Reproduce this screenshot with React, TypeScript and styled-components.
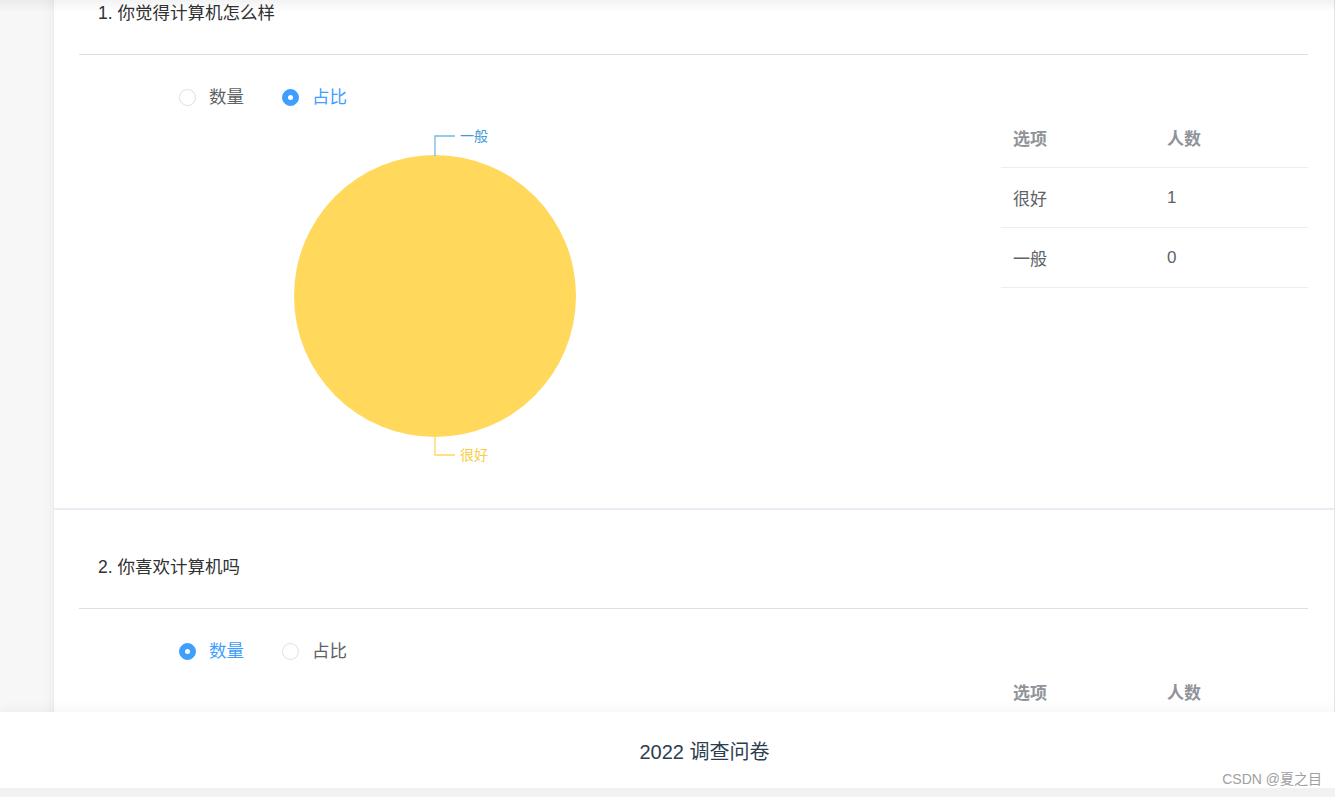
import React, { useLayoutEffect, useRef } from 'react'
import styled, { createGlobalStyle } from 'styled-components'

const GlobalStyle = createGlobalStyle`
  html, body { margin: 0; padding: 0; }
  body {
    font-family: "Liberation Sans", "Noto Sans CJK SC", sans-serif;
    background: #f2f2f2;
  }
`

type Row = { label: string; count: number }

type Question = {
  title: string
  mode: 'count' | 'ratio'
  rows: Row[]
}

const questions: Question[] = [
  {
    title: '1. 你觉得计算机怎么样',
    mode: 'ratio',
    rows: [
      { label: '很好', count: 1 },
      { label: '一般', count: 0 },
    ],
  },
  {
    title: '2. 你喜欢计算机吗',
    mode: 'count',
    rows: [
      { label: '很好', count: 1 },
      { label: '一般', count: 0 },
    ],
  },
]

const PieChart = () => (
  <svg width="520" height="365" viewBox="0 0 520 365">
    <circle cx="256" cy="188" r="141" fill="#ffd85c" />
    {/* 一般 label (zero slice) */}
    <polyline points="256,48 256,28 276,28" fill="none" stroke="#73b8e6" strokeWidth="1.3" />
    <text x="281" y="33" fontSize="14" fill="#3f9ad6" fontFamily="Liberation Sans, Noto Sans CJK SC, sans-serif">
      一般
    </text>
    {/* 很好 label */}
    <polyline points="256,329 256,347 276,347" fill="none" stroke="#ffd85c" strokeWidth="1.3" />
    <text x="281" y="352" fontSize="14" fill="#f8cd4a" fontFamily="Liberation Sans, Noto Sans CJK SC, sans-serif">
      很好
    </text>
  </svg>
)

const App = () => {
  const scrollRef = useRef<HTMLDivElement>(null)

  useLayoutEffect(() => {
    if (scrollRef.current) scrollRef.current.scrollTop = 44
  }, [])

  return (
    <Page>
      <GlobalStyle />
      <Viewport>
        <ScrollArea ref={scrollRef}>
          <Main>
            {questions.map((q, i) => (
              <Card key={i}>
                <CardHead>
                  <Title>{q.title}</Title>
                </CardHead>
                <CardBody>
                  <ChartSide>
                    <RadioGroup>
                      <RadioItem $checked={q.mode === 'count'}>
                        <RadioDot $checked={q.mode === 'count'} />
                        数量
                      </RadioItem>
                      <RadioItem $checked={q.mode === 'ratio'}>
                        <RadioDot $checked={q.mode === 'ratio'} />
                        占比
                      </RadioItem>
                    </RadioGroup>
                    {q.mode === 'ratio' ? <PieChart /> : <ChartBlank />}
                  </ChartSide>
                  <Table>
                    <colgroup>
                      <col style={{ width: 154 }} />
                      <col />
                    </colgroup>
                    <thead>
                      <tr>
                        <Th>选项</Th>
                        <Th>人数</Th>
                      </tr>
                    </thead>
                    <tbody>
                      {q.rows.map((r) => (
                        <tr key={r.label}>
                          <Td>{r.label}</Td>
                          <Td>{r.count}</Td>
                        </tr>
                      ))}
                    </tbody>
                  </Table>
                </CardBody>
              </Card>
            ))}
          </Main>
        </ScrollArea>
        <TopShade />
      </Viewport>
      <Footer>
        2022 调查问卷
        <Watermark>CSDN @夏之目</Watermark>
      </Footer>
    </Page>
  )
}

export default App

const Page = styled.div`
  height: 797px;
  display: flex;
  flex-direction: column;
  background: #f2f2f2;
  overflow: hidden;
`

const Viewport = styled.div`
  position: relative;
  height: 712px;
  flex-shrink: 0;
`

const ScrollArea = styled.div`
  height: 100%;
  overflow: hidden;
  background: #f7f7f7;
`

const TopShade = styled.div`
  position: absolute;
  left: 0;
  right: 0;
  top: 0;
  height: 12px;
  background: linear-gradient(to bottom, rgba(0, 0, 0, 0.05), rgba(0, 0, 0, 0));
  pointer-events: none;
`

const Main = styled.div`
  margin-left: 53px;
  width: 1280px;
  display: flex;
  flex-direction: column;
  gap: 2px;
  background: #e9edf3;
  border-left: 1px solid #ececec;
  border-right: 1px solid #e4e4e4;
  box-shadow: -4px 0 8px rgba(0, 0, 0, 0.03);
`

const Card = styled.div`
  background: #fff;
  padding: 0 26px 35px 25px;
`

const CardHead = styled.div`
  padding: 45px 0 29px 19px;
  border-bottom: 1px solid #dcdfe6;
`

const Title = styled.div`
  font-size: 17.5px;
  line-height: 24px;
  color: #303133;
`

const CardBody = styled.div`
  display: flex;
  justify-content: space-between;
  align-items: flex-start;
`

const ChartSide = styled.div`
  padding: 32px 0 0 100px;
  display: flex;
  flex-direction: column;
`

const ChartBlank = styled.div`
  width: 520px;
  height: 365px;
`

const RadioGroup = styled.div`
  display: flex;
  align-items: center;
  gap: 38px;
  height: 20px;
  margin-bottom: 1px;
`

const RadioItem = styled.label<{ $checked: boolean }>`
  display: flex;
  align-items: center;
  gap: 13px;
  font-size: 17.5px;
  line-height: 20px;
  color: ${(p) => (p.$checked ? '#409eff' : '#606266')};
`

const RadioDot = styled.span<{ $checked: boolean }>`
  width: 17px;
  height: 17px;
  box-sizing: border-box;
  border-radius: 50%;
  border: 1px solid ${(p) => (p.$checked ? '#409eff' : '#dcdfe6')};
  background: ${(p) => (p.$checked ? '#409eff' : '#fff')};
  display: flex;
  align-items: center;
  justify-content: center;

  &::after {
    content: '';
    width: 5px;
    height: 5px;
    border-radius: 50%;
    background: #fff;
  }
`

const Table = styled.table`
  width: 307px;
  margin-top: 53px;
  border-collapse: collapse;
  table-layout: fixed;
  font-size: 17px;
`

const Th = styled.th`
  height: 59px;
  padding: 0 12px;
  text-align: left;
  font-weight: bold;
  color: #909399;
  border-bottom: 1px solid #ebeef5;
`

const Td = styled.td`
  height: 59px;
  padding: 0 12px;
  color: #606266;
  border-bottom: 1px solid #ebeef5;
`

const Footer = styled.footer`
  position: relative;
  z-index: 1;
  height: 76px;
  flex-shrink: 0;
  padding-left: 74px;
  background: #fff;
  display: flex;
  align-items: center;
  justify-content: center;
  font-size: 20px;
  color: #2c3e50;
  box-shadow: 0 -4px 10px rgba(0, 0, 0, 0.04);
`

const Watermark = styled.span`
  position: absolute;
  right: 13px;
  bottom: 0px;
  font-size: 14px;
  color: #a0a0a0;
`
